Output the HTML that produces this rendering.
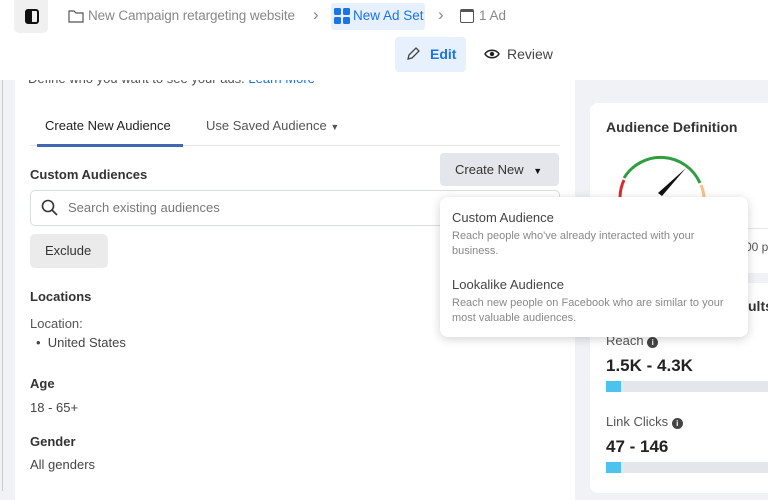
<!DOCTYPE html>
<html><head><meta charset="utf-8"><style>
*{box-sizing:border-box;margin:0;padding:0}
body{width:768px;height:491px;overflow:hidden;background:#f0f2f5;font-family:"Liberation Sans",Arial,sans-serif;position:relative;color:#1c1e21}
.abs{position:absolute}
.top{left:0;top:0;width:768px;height:80px;background:#fff}
.t{position:absolute;white-space:nowrap;font-family:"Liberation Sans",Arial,sans-serif}
</style></head><body>
<div class="abs" style="left:2px;top:0;width:1px;height:491px;background:#ccc"></div>
<div class="abs" style="left:15px;top:70px;width:560px;height:430px;background:#fff"></div>
<div class="abs top"></div>
<div class="abs" style="left:14px;top:0;width:34px;height:33px;background:#f0f0f0;border-radius:0 0 5px 5px"></div>
<div class="abs" style="left:25px;top:9px;width:14px;height:15px;border:2px solid #111;border-radius:3px"><div style="width:5px;height:11px;background:#111"></div></div>
<svg class="abs" style="left:68px;top:9px" width="16" height="14"><path d="M1 2h5l2 2h7v9H1z" fill="none" stroke="#555" stroke-width="1.2"/></svg>
<div class="t" style="left:88px;top:8px;font-size:13.5px;color:#888;letter-spacing:-0.1px">New Campaign retargeting website</div>
<div class="t" style="left:313px;top:5px;font-size:17px;color:#888">›</div>
<div class="abs" style="left:331px;top:3px;width:94px;height:27px;background:#e7f0fd;border-radius:3px"></div>
<svg class="abs" style="left:334px;top:8px" width="17" height="17"><rect x="0" y="0" width="7" height="7" rx="1.5" fill="#1a73e8"/><rect x="9" y="0" width="7" height="7" rx="1.5" fill="#1a73e8"/><rect x="0" y="9" width="7" height="7" rx="1.5" fill="#1a73e8"/><rect x="9" y="9" width="7" height="7" rx="1.5" fill="#1a73e8"/></svg>
<div class="t" style="left:353px;top:8px;font-size:13.5px;color:#1a73e8">New Ad Set</div>
<div class="t" style="left:438px;top:5px;font-size:17px;color:#888">›</div>
<div class="abs" style="left:460px;top:9px;width:14px;height:14px;border:1.2px solid #555;border-radius:2px;border-top-width:3px"></div>
<div class="t" style="left:479px;top:8px;font-size:13.5px;color:#888">1 Ad</div>
<div class="abs" style="left:395px;top:37px;width:71px;height:35px;background:#e7f0fd;border-radius:4px"></div>
<svg class="abs" style="left:406px;top:46px" width="15" height="15"><path d="M2 13l1-4 7-7 3 3-7 7z" fill="none" stroke="#444" stroke-width="1.3"/></svg>
<div class="t" style="left:430px;top:46px;font-size:14px;font-weight:bold;color:#1a73e8">Edit</div>
<svg class="abs" style="left:484px;top:48px" width="16" height="12"><path d="M1 6C4 1 12 1 15 6C12 11 4 11 1 6z" fill="none" stroke="#222" stroke-width="1.5"/><circle cx="8" cy="6" r="2.2" fill="#222"/></svg>
<div class="t" style="left:507px;top:46px;font-size:14px;color:#444">Review</div>
<div class="abs" style="left:28px;top:80px;width:300px;height:6px;overflow:hidden"><div class="t" style="top:-9px;left:0;font-size:13px;color:#555">Define who you want to see your ads. <span style="color:#1a73e8">Learn More</span></div></div>
<div class="t" style="left:45px;top:118px;font-size:13px;color:#222">Create New Audience</div>
<div class="t" style="left:206px;top:118px;font-size:13px;color:#555">Use Saved Audience <span style="font-size:9px">▼</span></div>
<div class="abs" style="left:30px;top:145px;width:530px;height:1px;background:#e4e6eb"></div>
<div class="abs" style="left:37px;top:144px;width:146px;height:3px;background:#4267b2"></div>
<div class="t" style="left:30px;top:167px;font-size:13px;font-weight:bold;color:#333">Custom Audiences</div>
<div class="abs" style="left:440px;top:153px;width:119px;height:33px;background:#e4e6eb;border-radius:4px"></div>
<div class="t" style="left:455px;top:162px;font-size:13px;color:#333">Create New <span style="font-size:9px;margin-left:6px;color:#111">▼</span></div>
<div class="abs" style="left:30px;top:190px;width:530px;height:36px;border:1px solid #dadde1;border-radius:5px;background:#fff"></div>
<svg class="abs" style="left:41px;top:199px" width="17" height="17"><circle cx="7" cy="7" r="5.5" fill="none" stroke="#333" stroke-width="1.6"/><path d="M11 11l5 5" stroke="#333" stroke-width="1.6"/></svg>
<div class="t" style="left:68px;top:200px;font-size:13px;color:#777">Search existing audiences</div>
<div class="abs" style="left:30px;top:234px;width:78px;height:34px;background:#ebebeb;border-radius:5px"></div>
<div class="t" style="left:45px;top:243px;font-size:13px;color:#333">Exclude</div>
<div class="t" style="left:30px;top:289px;font-size:13px;font-weight:bold;color:#333">Locations</div>
<div class="t" style="left:30px;top:316px;font-size:13px;color:#555">Location:</div>
<div class="t" style="left:36px;top:335px;font-size:13px;color:#444">• &nbsp;United States</div>
<div class="t" style="left:30px;top:376px;font-size:13px;font-weight:bold;color:#333">Age</div>
<div class="t" style="left:30px;top:400px;font-size:13px;color:#444">18 - 65+</div>
<div class="t" style="left:30px;top:434px;font-size:13px;font-weight:bold;color:#333">Gender</div>
<div class="t" style="left:30px;top:457px;font-size:13px;color:#444">All genders</div>
<div class="abs" style="left:590px;top:103px;width:190px;height:170px;background:#fff;border-radius:8px"></div>
<div class="t" style="left:606px;top:119px;font-size:14px;font-weight:bold;color:#333">Audience Definition</div>
<svg class="abs" style="left:610px;top:145px" width="110" height="60"><path d="M10 52A43 43 0 0 1 14 35" fill="none" stroke="#d32f2f" stroke-width="3"/><path d="M14 33A43 43 0 0 1 90 38" fill="none" stroke="#2e9e3e" stroke-width="3"/><path d="M91 40A43 43 0 0 1 94 52" fill="none" stroke="#f7c08a" stroke-width="3"/><path d="M76 23L48 48L52 51z" fill="#111"/></svg>
<div class="abs" style="left:590px;top:228px;width:190px;height:1px;background:#e4e6eb"></div>
<div class="t" style="left:745px;top:240px;font-size:12px;color:#555">00 pe</div>
<div class="abs" style="left:590px;top:283px;width:190px;height:210px;background:#fff;border-radius:8px"></div>
<div class="t" style="left:748px;top:298px;font-size:14px;font-weight:bold;color:#333">ults</div>
<div class="t" style="left:606px;top:333px;font-size:13px;color:#555">Reach <span style="display:inline-block;width:11px;height:11px;border-radius:50%;background:#444;color:#fff;font-size:8px;text-align:center;line-height:11px;font-weight:bold">i</span></div>
<div class="t" style="left:606px;top:356px;font-size:17px;font-weight:bold;color:#222">1.5K - 4.3K</div>
<div class="abs" style="left:606px;top:381px;width:170px;height:11px;background:#e4e6eb"><div style="width:15px;height:11px;background:#4cc3ef"></div></div>
<div class="t" style="left:606px;top:414px;font-size:13px;color:#555">Link Clicks <span style="display:inline-block;width:11px;height:11px;border-radius:50%;background:#444;color:#fff;font-size:8px;text-align:center;line-height:11px;font-weight:bold">i</span></div>
<div class="t" style="left:606px;top:437px;font-size:17px;font-weight:bold;color:#222">47 - 146</div>
<div class="abs" style="left:606px;top:462px;width:170px;height:11px;background:#e4e6eb"><div style="width:15px;height:11px;background:#4cc3ef"></div></div>
<div class="abs" style="left:440px;top:197px;width:308px;height:140px;background:#fff;border-radius:8px;box-shadow:0 2px 10px rgba(0,0,0,.18)"></div>
<div class="t" style="left:452px;top:210px;font-size:13px;color:#444">Custom Audience</div>
<div class="t" style="left:452px;top:229px;font-size:11px;color:#888;line-height:15px">Reach people who've already interacted with your<br>business.</div>
<div class="t" style="left:452px;top:277px;font-size:13px;color:#444">Lookalike Audience</div>
<div class="t" style="left:452px;top:296px;font-size:11px;color:#888;line-height:15px">Reach new people on Facebook who are similar to your<br>most valuable audiences.</div>
</body></html>
